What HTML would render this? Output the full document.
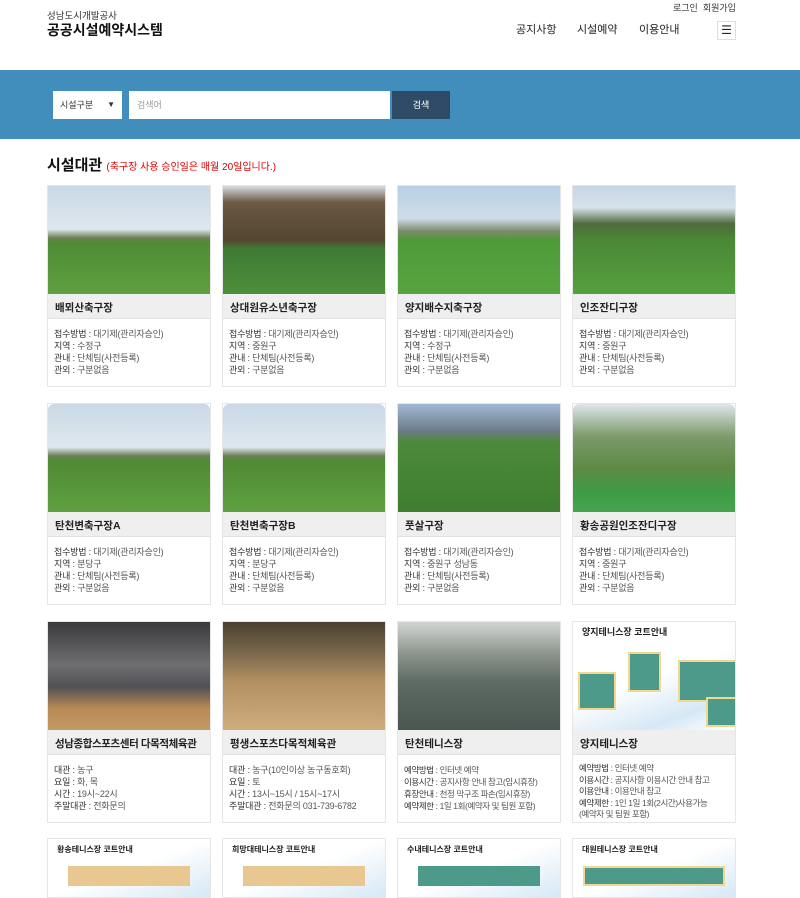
<!DOCTYPE html>
<html><head><meta charset="utf-8"><style>
*{margin:0;padding:0;box-sizing:border-box}
body{width:800px;height:880px;overflow:hidden;background:#fff;font-family:"Liberation Sans","Noto Sans CJK KR",sans-serif;color:#222;position:relative}
.a{position:absolute;line-height:1.15}
.card{position:absolute;width:164px;border:1px solid #e6e6e6;background:#fff}
.img{height:108px;position:relative;overflow:hidden}
.field{background:linear-gradient(#c9d9e6 0%,#dfe7ee 40%,#6f7f55 48%,#4f8a35 52%,#5fa040 100%)}
.t{height:25px;background:#efefef;border-bottom:1px solid #e2e2e2;font-size:10.5px;font-weight:bold;padding:6px 7px;color:#222;white-space:nowrap;overflow:hidden}
.b{padding:9px 6px;font-size:9px;line-height:12px;color:#555;height:67px;overflow:hidden;white-space:nowrap;letter-spacing:-0.2px}
.b b{color:#333;font-weight:normal}
</style></head><body>
<div class="a" style="left:673px;top:3px;font-size:9px;color:#333">로그인 &nbsp;회원가입</div>
<div class="a" style="left:47px;top:12px;font-size:9.5px;color:#333">성남도시개발공사</div>
<div class="a" style="left:47px;top:22px;font-size:14px;font-weight:bold;color:#111">공공시설예약시스템</div>
<div class="a" style="left:516px;top:24px;font-size:11px">공지사항</div>
<div class="a" style="left:577px;top:24px;font-size:11px">시설예약</div>
<div class="a" style="left:639px;top:24px;font-size:11px">이용안내</div>
<div class="a" style="left:717px;top:21px;width:19px;height:19px;border:1px solid #ddd;font-size:12px;text-align:center;line-height:17px">☰</div>
<div class="a" style="left:0;top:70px;width:800px;height:69px;background:#418ebd"></div>
<div class="a" style="left:53px;top:91px;width:69px;height:28px;background:#fff;font-size:9px;padding:9px 7px;color:#333">시설구분<span style="float:right;font-size:8px">▼</span></div>
<div class="a" style="left:129px;top:91px;width:261px;height:28px;background:#fff;font-size:9px;padding:9px 8px;color:#999">검색어</div>
<div class="a" style="left:392px;top:91px;width:58px;height:28px;background:#2f4a66;color:#fff;font-size:9px;text-align:center;line-height:28px">검색</div>
<div class="a" style="left:47px;top:157px;font-size:15px;font-weight:bold;color:#111">시설대관 <span style="font-size:10px;color:#d00;font-weight:normal">(축구장 사용 승인일은 매월 20일입니다.)</span></div>

<div class="card" style="left:47px;top:185px"><div class="img field"></div><div class="t">배뫼산축구장</div><div class="b"><b>접수방법 :</b> 대기제(관리자승인)<br><b>지역 :</b> 수정구<br><b>관내 :</b> 단체팀(사전등록)<br><b>관외 :</b> 구분없음</div></div>
<div class="card" style="left:222px;top:185px"><div class="img" style="background:linear-gradient(#d8dde0 0%,#6b5a44 15%,#54462f 50%,#3f7a34 58%,#4d8f3a 100%)"></div><div class="t">상대원유소년축구장</div><div class="b"><b>접수방법 :</b> 대기제(관리자승인)<br><b>지역 :</b> 중원구<br><b>관내 :</b> 단체팀(사전등록)<br><b>관외 :</b> 구분없음</div></div>
<div class="card" style="left:397px;top:185px"><div class="img" style="background:linear-gradient(#b8cfe3 0%,#cfdde9 30%,#7b8a6a 42%,#4f9a3a 50%,#56a43f 100%)"></div><div class="t">양지배수지축구장</div><div class="b"><b>접수방법 :</b> 대기제(관리자승인)<br><b>지역 :</b> 수정구<br><b>관내 :</b> 단체팀(사전등록)<br><b>관외 :</b> 구분없음</div></div>
<div class="card" style="left:572px;top:185px"><div class="img" style="background:linear-gradient(#c5d6e5 0%,#d7e2ea 20%,#4f6b3c 35%,#4a8836 50%,#56a03f 100%)"></div><div class="t">인조잔디구장</div><div class="b"><b>접수방법 :</b> 대기제(관리자승인)<br><b>지역 :</b> 중원구<br><b>관내 :</b> 단체팀(사전등록)<br><b>관외 :</b> 구분없음</div></div>

<div class="card" style="left:47px;top:403px"><div class="img field" style="border-radius:6px 6px 0 0"></div><div class="t">탄천변축구장A</div><div class="b"><b>접수방법 :</b> 대기제(관리자승인)<br><b>지역 :</b> 분당구<br><b>관내 :</b> 단체팀(사전등록)<br><b>관외 :</b> 구분없음</div></div>
<div class="card" style="left:222px;top:403px"><div class="img field" style="border-radius:6px 6px 0 0"></div><div class="t">탄천변축구장B</div><div class="b"><b>접수방법 :</b> 대기제(관리자승인)<br><b>지역 :</b> 분당구<br><b>관내 :</b> 단체팀(사전등록)<br><b>관외 :</b> 구분없음</div></div>
<div class="card" style="left:397px;top:403px"><div class="img" style="background:linear-gradient(#9fb9d6 0%,#6d7a86 25%,#4d8a3a 35%,#3f7e30 100%)"></div><div class="t">풋살구장</div><div class="b"><b>접수방법 :</b> 대기제(관리자승인)<br><b>지역 :</b> 중원구 성남동<br><b>관내 :</b> 단체팀(사전등록)<br><b>관외 :</b> 구분없음</div></div>
<div class="card" style="left:572px;top:403px"><div class="img" style="background:linear-gradient(#dfe6ea 0%,#7c9a6a 30%,#5d8a45 60%,#3f9a46 80%,#45a54c 100%);border-radius:6px 6px 0 0"></div><div class="t">황송공원인조잔디구장</div><div class="b"><b>접수방법 :</b> 대기제(관리자승인)<br><b>지역 :</b> 중원구<br><b>관내 :</b> 단체팀(사전등록)<br><b>관외 :</b> 구분없음</div></div>

<div class="card" style="left:47px;top:621px"><div class="img" style="background:linear-gradient(#3a3a3e 0%,#6f6e70 40%,#505055 60%,#b78a55 80%,#c49a65 100%)"></div><div class="t" style="letter-spacing:-0.4px">성남종합스포츠센터 다목적체육관</div><div class="b"><b>대관 :</b> 농구<br><b>요일 :</b> 화, 목<br><b>시간 :</b> 19시~22시<br><b>주말대관 :</b> 전화문의</div></div>
<div class="card" style="left:222px;top:621px"><div class="img" style="background:linear-gradient(#4a4030 0%,#7c6a4e 30%,#b39062 55%,#d0ac7c 100%)"></div><div class="t">평생스포츠다목적체육관</div><div class="b"><b>대관 :</b> 농구(10인이상 농구동호회)<br><b>요일 :</b> 토<br><b>시간 :</b> 13시~15시 / 15시~17시<br><b>주말대관 :</b> 전화문의 031-739-6782</div></div>
<div class="card" style="left:397px;top:621px"><div class="img" style="background:linear-gradient(#d2d6d2 0%,#8a948c 30%,#5f6b65 55%,#4a5550 100%)"></div><div class="t">탄천테니스장</div><div class="b" style="font-size:8.5px;letter-spacing:-0.4px"><b>예약방법 :</b> 인터넷 예약<br><b>이용시간 :</b> 공지사항 안내 참고(임시휴장)<br><b>휴장안내 :</b> 천정 막구조 파손(임시휴장)<br><b>예약제한 :</b> 1일 1회(예약자 및 팀원 포함)</div></div>
<div class="card" style="left:572px;top:621px"><div class="img" style="background:linear-gradient(160deg,#fff 50%,#d6e8f5 80%,#fff)"><div class="a" style="left:9px;top:5px;font-size:9px;font-weight:bold">양지테니스장 코트안내</div><div class="a" style="left:5px;top:50px;width:38px;height:38px;background:#4e9a8a;border:2px solid #f1d890"></div><div class="a" style="left:55px;top:30px;width:33px;height:40px;background:#4e9a8a;border:2px solid #f1d890"></div><div class="a" style="left:105px;top:38px;width:65px;height:42px;background:#4e9a8a;border:2px solid #f1d890"></div><div class="a" style="left:133px;top:75px;width:32px;height:30px;background:#4e9a8a;border:2px solid #f1d890"></div></div><div class="t">양지테니스장</div><div class="b" style="font-size:8.5px;letter-spacing:-0.4px;padding-top:8px;line-height:11.5px"><b>예약방법 :</b> 인터넷 예약<br><b>이용시간 :</b> 공지사항 이용시간 안내 참고<br><b>이용안내 :</b> 이용안내 참고<br><b>예약제한 :</b> 1인 1일 1회(2시간)사용가능<br>(예약자 및 팀원 포함)</div></div>

<div class="card" style="left:47px;top:838px;height:60px;background:linear-gradient(160deg,#fff 50%,#d6e8f5)"><div style="font-size:8px;font-weight:bold;padding:5px 9px">황송테니스장 코트안내</div><div style="margin:6px 20px;height:20px;background:#e8c890"></div></div>
<div class="card" style="left:222px;top:838px;height:60px;background:linear-gradient(160deg,#fff 50%,#d6e8f5)"><div style="font-size:8px;font-weight:bold;padding:5px 9px">희망대테니스장 코트안내</div><div style="margin:6px 20px;height:20px;background:#e8c890"></div></div>
<div class="card" style="left:397px;top:838px;height:60px;background:linear-gradient(160deg,#fff 50%,#d6e8f5)"><div style="font-size:8px;font-weight:bold;padding:5px 9px">수내테니스장 코트안내</div><div style="margin:6px 20px;height:20px;background:#4e9a8a"></div></div>
<div class="card" style="left:572px;top:838px;height:60px;background:linear-gradient(160deg,#fff 50%,#d6e8f5)"><div style="font-size:8px;font-weight:bold;padding:5px 9px">대원테니스장 코트안내</div><div style="margin:6px 10px;height:20px;background:#4e9a8a;border:2px solid #f1d890"></div></div>
</body></html>
